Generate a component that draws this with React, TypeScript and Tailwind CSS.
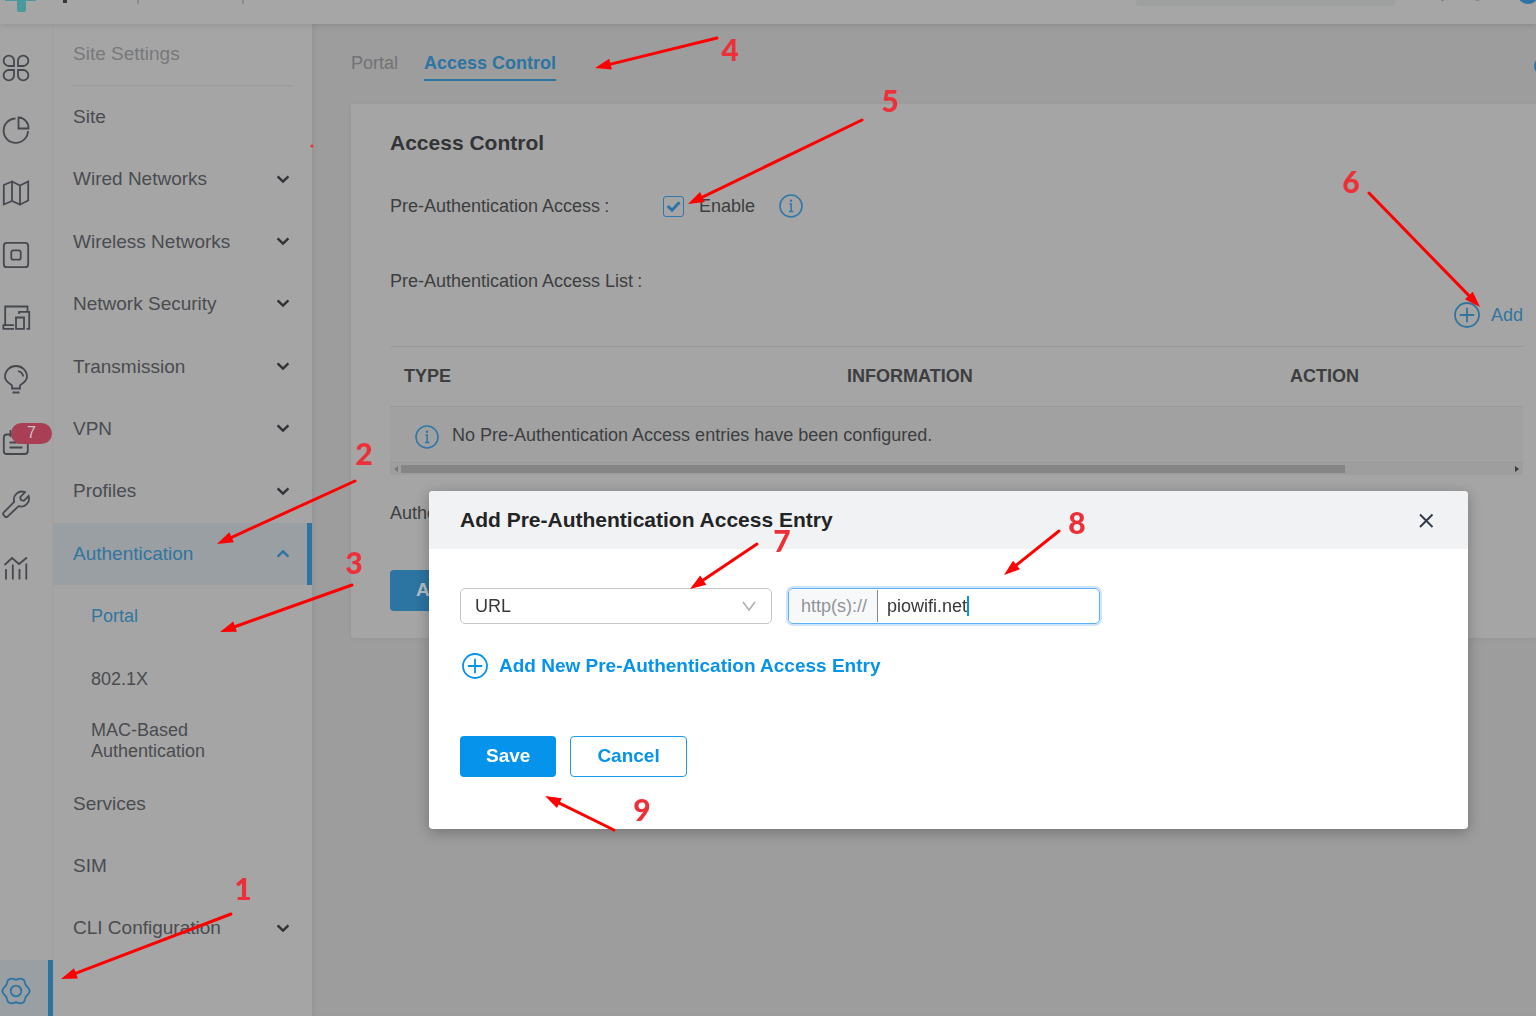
import { useState, type ReactNode } from 'react';

type NavItem = { label: string; expandable?: boolean; active?: boolean };

const topNav: NavItem[] = [
    { label: 'Site' },
    { label: 'Wired Networks', expandable: true },
    { label: 'Wireless Networks', expandable: true },
    { label: 'Network Security', expandable: true },
    { label: 'Transmission', expandable: true },
    { label: 'VPN', expandable: true },
    { label: 'Profiles', expandable: true },
    { label: 'Authentication', expandable: true, active: true },
];

const bottomNav: NavItem[] = [
    { label: 'Services' },
    { label: 'SIM' },
    { label: 'CLI Configuration', expandable: true },
];

// outline with six soft lobes
const gearPath =
    Array.from({ length: 73 }, (_, i) => {
        const a = (i * 5 * Math.PI) / 180;
        const r = 12.5 + 1.1 * Math.cos(6 * a);
        return `${i ? 'L' : 'M'}${(16 + r * Math.cos(a)).toFixed(2)} ${(16 + r * Math.sin(a)).toFixed(2)}`;
    }).join('') + 'Z';

const railIcons: { name: string; art: ReactNode; badge?: string }[] = [
    {
        name: 'Dashboard',
        art: (
            <path d="M14 15H8.8A5.2 5.2 0 1 1 14 9.8ZM18 15V9.8A5.2 5.2 0 1 1 23.2 15ZM14 19V24.2A5.2 5.2 0 1 1 8.8 19ZM18 19H23.2A5.2 5.2 0 1 1 18 24.2Z" />
        ),
    },
    { name: 'Statistics', art: <path d="M15.5 4.5A12.2 12.2 0 1 0 28 17M18.5 3.5V14.5H28.5A10.5 10.5 0 0 0 18.5 3.5Z" /> },
    { name: 'Map', art: <path d="M3.8 9L12 5.5V25L3.8 28.5ZM12 5.5L20 9.5V28.5L12 25M20 9.5L28.2 5.5V24.5L20 28.5" /> },
    {
        name: 'Devices',
        art: (
            <>
                <rect x="3.8" y="3.8" width="24.4" height="24.4" rx="3" />
                <rect x="11.3" y="11.3" width="9.4" height="9.4" rx="2" />
            </>
        ),
    },
    {
        name: 'Clients',
        art: (
            <path d="M27.5 10V5.5H5.2V24.2M14 24.2H3.4V27.8H14M16 16.5H24V27.8H16ZM19 13V10.8H29.2V27.8H26.5" />
        ),
    },
    {
        name: 'Insight',
        art: (
            <path d="M12 25.5V22.5C10 20 5 19 5 13.5A11 10.5 0 0 1 27 13.5C27 19 22 20 20 22.5V25.5ZM12.5 29.5H19.5M18 8.2Q22.5 9 23.2 13.5" />
        ),
    },
    {
        name: 'Log',
        badge: '7',
        art: (
            <>
                <rect x="3.8" y="8.5" width="24" height="19.5" rx="3" />
                <path d="M10.5 4V11M21 4V11M9.5 16.5H22.5M9.5 21.5H22.5" />
            </>
        ),
    },
    {
        name: 'Tools',
        art: (
            <path d="M25 4.2L20.2 9.2 21 12 23.8 12.8 28.6 8A8 8 0 0 1 18.6 18.2L7.5 28.6A1.6 1.6 0 0 1 5 28.6L3.6 27A1.6 1.6 0 0 1 3.6 24.6L14.2 13.8A8 8 0 0 1 25 4.2Z" />
        ),
    },
    {
        name: 'Reports',
        art: <path d="M4.5 14L12 7 19 13 27 6.5M6 18V28.5M12.8 13.5V28.5M19.5 18V28.5M26.3 12.5V28.5" />,
    },
];

// [number, text x, baseline y, tail x, tail y, tip x, tip y]
const steps = [
    [1, 243, 900, 231, 914, 61, 979],
    [2, 364, 465, 355, 481, 217, 544],
    [3, 354, 574, 352, 585, 220, 632],
    [4, 730, 61, 717, 38, 595, 68],
    [5, 890, 112, 862, 120, 688, 204],
    [6, 1351, 193, 1369, 193, 1480, 307],
    [7, 782, 552, 757, 544, 690, 589],
    [8, 1077, 534, 1059, 531, 1004, 575],
    [9, 642, 821, 614, 830, 545, 796],
];

function Chevron({ up = false }: { up?: boolean }) {
    return (
        <svg className="h-3 w-3.5" viewBox="0 0 14 12" fill="none" stroke="currentColor" strokeWidth="2.4">
            <path d={up ? 'M1.6 8.6L7 3.4 12.4 8.6' : 'M1.6 2.4L7 7.6 12.4 2.4'} />
        </svg>
    );
}

function InfoIcon() {
    return (
        <svg className="h-6 w-6 shrink-0 text-[#2f78a8]" viewBox="0 0 24 24" fill="none" stroke="currentColor">
            <circle cx="12" cy="12" r="11" strokeWidth="1.6" />
            <path d="M10.4 10H12.2V17.6M10 17.6H14.4" strokeWidth="1.5" />
            <circle cx="12" cy="6.8" r="1.2" fill="currentColor" stroke="none" />
        </svg>
    );
}

function PlusIcon() {
    return (
        <svg className="h-[26px] w-[26px]" viewBox="0 0 26 26" fill="none" stroke="currentColor" strokeWidth="1.8">
            <circle cx="13" cy="13" r="12" />
            <path d="M13 5.8V20.2M5.8 13H20.2" />
        </svg>
    );
}

function NavRow({ label, expandable, active }: NavItem) {
    return (
        <li className="flex min-h-12 flex-1">
            <a
                href="#"
                className={`flex flex-1 items-center justify-between pl-5 ${
                    active
                        ? 'border-r-5 border-[#2c74a2] bg-[#999fa3] pr-[17px] text-[#31759f]'
                        : 'pr-[22px] text-[#4a4c50]'
                }`}
            >
                {label}
                {expandable && (
                    <span className={active ? 'text-[#2c74a2]' : 'text-[#303236]'}>
                        <Chevron up={active} />
                    </span>
                )}
            </a>
        </li>
    );
}

function TopBar() {
    return (
        <header className="relative z-10 flex h-6 shrink-0 items-start justify-between bg-[#a6a6a6] shadow-[0_1px_6px_rgba(0,0,0,0.12)]">
            <svg className="h-3 w-[260px]" viewBox="0 0 260 12">
                <path d="M5 0H36V1H26V10Q26 12 24 12H19Q17 12 17 10V1H5Z" fill="#4b999c" />
                <path d="M63 0H67V3H63Z" fill="#36383a" />
                <path d="M137 0H139V4H137ZM242 0H244V4H242Z" fill="#8b8c8d" />
            </svg>
            <div className="flex items-start">
                <div className="h-[6px] w-[259px] rounded-b-sm bg-[#9da09f]" />
                <svg className="h-2 w-[141px]" viewBox="0 0 141 8">
                    <path d="M46 0H49L47.5 1.5ZM80 0H85L82 1Z" fill="#77797c" />
                    <circle cx="133" cy="-7" r="11" fill="#2c74a2" />
                </svg>
            </div>
        </header>
    );
}

function Rail() {
    return (
        <aside className="flex w-[53px] shrink-0 flex-col border-r border-[#a0a0a0] pt-3 text-[#45484e]">
            {railIcons.map(({ name, art, badge }) => (
                <a key={name} href="#" aria-label={name} className="relative flex flex-[10] items-center">
                    <svg className="h-8 w-8" viewBox="0 0 32 32" fill="none" stroke="currentColor" strokeWidth="1.8">
                        {art}
                    </svg>
                    {badge && (
                        <span className="absolute top-3 right-0 flex h-[21px] w-[41px] items-center justify-center rounded-full bg-[#a83f55] text-base text-[#c9c3c5]">
                            {badge}
                        </span>
                    )}
                </a>
            ))}
            <div className="flex-[58]" />
            <a
                href="#"
                aria-label="Settings"
                className="-mr-px flex h-14 shrink-0 items-start border-r-5 border-[#2c74a2] bg-[#999fa3] pt-[15px] text-[#2c74a2]"
            >
                <svg className="h-8 w-8" viewBox="0 0 32 32" fill="none" stroke="currentColor" strokeWidth="1.8">
                    <path d={gearPath} />
                    <circle cx="16" cy="16" r="5.3" />
                </svg>
            </a>
        </aside>
    );
}

function Sidebar() {
    return (
        <nav className="flex w-[259px] shrink-0 flex-col pb-14 text-[19px]">
            <div className="mx-5 flex h-[62px] items-center border-b border-[#9c9c9c] text-[#77797b]">
                Site Settings
            </div>
            <ul className="flex flex-1 flex-col">
                {topNav.map((item) => (
                    <NavRow key={item.label} {...item} />
                ))}
                {['Portal', '802.1X', 'MAC-Based Authentication'].map((label) => (
                    <li key={label} className="flex min-h-12 flex-1 items-center pr-20 pl-[38px] text-lg leading-[21px]">
                        <a href="#" className={label === 'Portal' ? 'text-[#31759f]' : 'text-[#4a4c50]'}>
                            {label}
                        </a>
                    </li>
                ))}
                {bottomNav.map((item) => (
                    <NavRow key={item.label} {...item} />
                ))}
            </ul>
        </nav>
    );
}

function AccessControl() {
    const [enabled, setEnabled] = useState(true);

    return (
        <section className="mt-[23px] bg-[#a5a5a5] pt-[27px] pr-[13px] pb-[27px] pl-[39px] text-lg leading-6 text-[#3c3e40] shadow-[0_1px_4px_rgba(0,0,0,0.06)]">
            <h1 className="text-[21px] leading-6 font-bold text-[#333435]">Access Control</h1>

            <div className="mt-[39px] flex h-6 items-center">
                <span className="w-[273px]">
                    Pre-Authentication Access<span className="ml-1">:</span>
                </span>
                <span className="relative flex">
                    <input
                        id="pre-auth"
                        type="checkbox"
                        checked={enabled}
                        onChange={(e) => setEnabled(e.target.checked)}
                        className="h-[21px] w-[21px] appearance-none rounded-[3px] border border-[#2f78a8]"
                    />
                    {enabled && (
                        <svg
                            className="pointer-events-none absolute inset-0 h-[21px] w-[21px] text-[#2c74a2]"
                            viewBox="0 0 21 21"
                            fill="none"
                            stroke="currentColor"
                            strokeWidth="3"
                        >
                            <path d="M4.8 10L9 14.2 16.5 6.2" />
                        </svg>
                    )}
                </span>
                <label htmlFor="pre-auth" className="ml-[15px]">
                    Enable
                </label>
                <span className="ml-6">
                    <InfoIcon />
                </span>
            </div>

            <h2 className="mt-[51px]">
                Pre-Authentication Access List<span className="ml-1">:</span>
            </h2>

            <div className="mt-[9px] flex justify-end">
                <button type="button" className="flex items-center gap-[11px] text-[#31759f]">
                    <PlusIcon />
                    Add
                </button>
            </div>

            <div className="mt-[18px] overflow-hidden rounded-tl border-t border-[#989898]">
                <table className="w-full min-w-[1329px] table-fixed text-left">
                    <thead>
                        <tr className="h-[59px]">
                            <th className="pl-3.5">TYPE</th>
                            <th className="pl-3.5">INFORMATION</th>
                            <th className="pl-3.5">ACTION</th>
                        </tr>
                    </thead>
                    <tbody>
                        <tr className="h-14 border-y border-[#989898] bg-[#a1a1a1]">
                            <td colSpan={3} className="pl-[25px]">
                                <div className="flex items-end gap-[13px] pt-1">
                                    <InfoIcon />
                                    <span className="pb-0.5">
                                        No Pre-Authentication Access entries have been configured.
                                    </span>
                                </div>
                            </td>
                        </tr>
                    </tbody>
                </table>
            </div>
            <div className="flex h-3 items-center justify-between bg-[#9e9e9e] px-1">
                <svg className="h-2 w-1" viewBox="0 0 4 8">
                    <path d="M4 1V7L0 4Z" fill="#777" />
                </svg>
                <div className="mx-[3px] flex-1">
                    <div className="h-2 w-[85%] bg-[#858585]" />
                </div>
                <svg className="h-2 w-1" viewBox="0 0 4 8">
                    <path d="M0 1V7L4 4Z" fill="#3a3a3a" />
                </svg>
            </div>

            <p className="mt-[26px]">Authentication</p>
            <button
                type="button"
                className="mt-[45px] block h-[41px] rounded bg-[#2c74a2] px-[26px] text-[19px] font-bold text-[#b4bcc2]"
            >
                Apply
            </button>
        </section>
    );
}

function EntryDialog() {
    const [type, setType] = useState('URL');
    const [url, setUrl] = useState('piowifi.net');

    return (
        <div className="fixed inset-0 z-20 flex items-start pt-[491px] pr-[68px] pl-[429px]">
            <div
                role="dialog"
                aria-labelledby="dialog-title"
                className="flex-1 overflow-hidden rounded bg-white shadow-[0_3px_14px_rgba(0,0,0,0.28)]"
            >
                <div className="flex h-[58px] items-center justify-between bg-[#f1f2f4] pr-[34px] pl-[31px]">
                    <h2 id="dialog-title" className="text-[21px] font-bold text-[#222426]">
                        Add Pre-Authentication Access Entry
                    </h2>
                    <button type="button" aria-label="Close" className="text-[#343c49]">
                        <svg className="h-4 w-4" viewBox="0 0 16 16" fill="none" stroke="currentColor" strokeWidth="2">
                            <path d="M2 2.5L14.5 15M14.5 2.5L2 15" />
                        </svg>
                    </button>
                </div>

                <div className="px-[31px] pt-[39px] pb-[52px]">
                    <div className="flex gap-4 text-lg text-[#36383a]">
                        <div className="relative w-[312px]">
                            <select
                                aria-label="Entry type"
                                value={type}
                                onChange={(e) => setType(e.target.value)}
                                className="h-9 w-full appearance-none rounded-[5px] border border-[#c3c6c8] px-3.5"
                            >
                                <option>URL</option>
                            </select>
                            <svg
                                className="pointer-events-none absolute top-3 right-4 h-3 w-3.5 text-[#abb0b3]"
                                viewBox="0 0 14 12"
                                fill="none"
                                stroke="currentColor"
                                strokeWidth="1.6"
                            >
                                <path d="M1 2L7 10 13 2" />
                            </svg>
                        </div>
                        <div className="flex h-9 w-[312px] items-center overflow-hidden rounded-[5px] border border-[#5cb0f8] shadow-[0_0_0_2px_#cfe5fb]">
                            <label
                                htmlFor="entry-url"
                                className="flex h-8 items-center border-r border-[#84888c] bg-[#f7f8fa] pr-2.5 pl-3 text-[#909498]"
                            >
                                http(s)://
                            </label>
                            <input
                                id="entry-url"
                                type="text"
                                value={url}
                                onChange={(e) => setUrl(e.target.value)}
                                className="field-sizing-content pl-[9px] outline-none"
                            />
                            <span className="h-5 w-0.5 bg-[#0593eb]" />
                        </div>
                    </div>

                    <button type="button" className="mt-7 ml-0.5 flex items-center gap-[11px] text-[19px] font-bold text-[#0593eb]">
                        <PlusIcon />
                        Add New Pre-Authentication Access Entry
                    </button>

                    <div className="mt-[55px] flex gap-3.5 text-[19px] font-bold">
                        <button type="button" className="h-[41px] rounded bg-[#0593eb] px-[26px] text-white">
                            Save
                        </button>
                        <button type="button" className="h-[41px] rounded border border-[#1e9aec] px-[26px] text-[#0593eb]">
                            Cancel
                        </button>
                    </div>
                </div>
            </div>
        </div>
    );
}

/* Numbered red arrows over the whole screen */
function Annotations() {
    return (
        <svg className="pointer-events-none fixed top-0 left-0 z-30 h-[1016px] w-[1536px]" viewBox="0 0 1536 1016">
            <circle cx="312" cy="146" r="1.5" fill="#ee2a2a" />
            {steps.map(([n, x, y, x1, y1, x2, y2]) => {
                const len = Math.hypot(x2 - x1, y2 - y1);
                const ux = (x2 - x1) / len;
                const uy = (y2 - y1) / len;
                const bx = x2 - ux * 16;
                const by = y2 - uy * 16;
                return (
                    <g key={n}>
                        <line x1={x1} y1={y1} x2={x2 - ux * 12} y2={y2 - uy * 12} stroke="#ff0000" strokeWidth="3" strokeLinecap="round" />
                        <polygon
                            points={`${x2},${y2} ${bx - uy * 5.5},${by + ux * 5.5} ${bx + uy * 5.5},${by - ux * 5.5}`}
                            fill="#ff0000"
                        />
                        <text x={x} y={y} textAnchor="middle" fill="#ed3038" className="font-['Lato',sans-serif] text-[30px] font-black">
                            {n}
                        </text>
                    </g>
                );
            })}
        </svg>
    );
}

export default function App() {
    return (
        <div className="flex min-h-screen flex-col overflow-hidden bg-[#a5a5a5] font-['Liberation_Sans',Arial,sans-serif]">
            <TopBar />
            <div className="flex flex-1">
                <Rail />
                <Sidebar />
                <main className="relative min-w-0 flex-1 bg-[#9d9d9e] pt-[27px] pl-[39px] shadow-[inset_4px_0_6px_-3px_rgba(0,0,0,0.08)]">
                    <nav className="flex gap-[26px] text-lg leading-6">
                        <a href="#" className="pb-[3px] text-[#717375]">
                            Portal
                        </a>
                        <a href="#" className="border-b-2 border-[#2c74a2] pb-1 font-bold text-[#2c74a2]">
                            Access Control
                        </a>
                    </nav>
                    <svg className="absolute top-[33px] right-0 h-[18px] w-0.5" viewBox="0 0 2 18">
                        <circle cx="9" cy="9" r="8" fill="none" stroke="#2c74a2" strokeWidth="2" />
                    </svg>
                    <AccessControl />
                </main>
            </div>
            <EntryDialog />
            <Annotations />
        </div>
    );
}
